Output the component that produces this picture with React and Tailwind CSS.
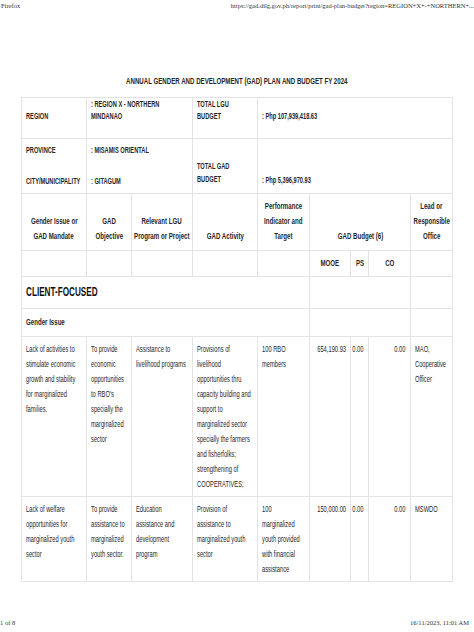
import React from "react";

const sans = "font-['Liberation_Sans',Arial,sans-serif]";

const Cell = ({ children, className = "", ...rest }) => (
  <td className={`border border-[#e3e3e3] px-[4px] ${className}`} {...rest}>
    {children}
  </td>
);

// the print is condensed, so every line of text is squeezed horizontally
const squeeze = {
  body: "scale-x-[0.64]",
  head: "scale-x-[0.68]",
  info: "scale-x-[0.63]",
};

const Line = ({ children, align = "left", kind = "body" }) => {
  const justify = align === "center" ? "justify-center" : align === "right" ? "justify-end" : "justify-start";
  const origin = align === "center" ? "origin-center" : align === "right" ? "origin-right" : "origin-left";
  return (
    <div className={`flex ${justify}`}>
      <span className={`whitespace-nowrap ${origin} ${squeeze[kind]}`}>{children}</span>
    </div>
  );
};

const Lines = ({ items, align, kind }) => (
  <>
    {items.map((t, i) => (
      <Line key={i} align={align} kind={kind}>{t}</Line>
    ))}
  </>
);

const rows = [
  {
    issue: ["Lack of activities to", "stimulate economic", "growth and stability", "for marginalized", "families."],
    objective: ["To provide", "economic", "opportunities", "to RBO's", "specially the", "marginalized", "sector"],
    program: ["Assistance to", "livelihood programs"],
    activity: [
      "Provisions of",
      "livelihood",
      "opportunities thru",
      "capacity building and",
      "support to",
      "marginalized sector",
      "specially the farmers",
      "and fisherfolks;",
      "strengthening of",
      "COOPERATIVES;",
    ],
    indicator: ["100 RBO", "members"],
    mooe: "654,190.93",
    ps: "0.00",
    co: "0.00",
    office: ["MAO,", "Cooperative", "Officer"],
  },
  {
    issue: ["Lack of welfare", "opportunities for", "marginalized youth", "sector"],
    objective: ["To provide", "assistance to", "marginalized", "youth sector."],
    program: ["Education", "assistance and", "development", "program"],
    activity: ["Provision of", "assistance to", "marginalized youth", "sector"],
    indicator: ["100", "marginalized", "youth provided", "with financial", "assistance"],
    mooe: "150,000.00",
    ps: "0.00",
    co: "0.00",
    office: ["MSWDO"],
  },
];

export default function App() {
  return (
    <div className="relative w-[474px] h-[632px] bg-white text-[#262626] overflow-hidden">
      {/* print header */}
      <div className="flex justify-between pl-[1px] pt-[1px] font-['Liberation_Serif',serif] text-[6.5px] leading-[9px] text-[#333]">
        <span>Firefox</span>
        <span className="whitespace-nowrap">https://gad.dilg.gov.ph/report/print/gad-plan-budget?region=REGION+X+-+NORTHERN+...</span>
      </div>

      <div className={`${sans} mt-[65px] text-[9px] font-bold leading-[12px]`}>
        <Line align="center" kind="head">ANNUAL GENDER AND DEVELOPMENT (GAD) PLAN AND BUDGET FY 2024</Line>
      </div>

      <table className={`${sans} mx-auto mt-[10px] w-[431px] table-fixed border-collapse text-[9px] leading-[15px]`}>
        <colgroup>
          <col className="w-[65px]" />
          <col className="w-[45px]" />
          <col className="w-[61px]" />
          <col className="w-[65px]" />
          <col className="w-[52px]" />
          <col className="w-[41px]" />
          <col className="w-[18px]" />
          <col className="w-[42px]" />
          <col className="w-[42px]" />
        </colgroup>
        <tbody>
          <tr className="h-[41px] align-bottom font-bold leading-[12px]">
            <Cell className="pb-[16px]"><Line kind="info">REGION</Line></Cell>
            <Cell colSpan={2} className="pb-[16px]">
              <Lines kind="info" items={[": REGION X - NORTHERN", "MINDANAO"]} />
            </Cell>
            <Cell className="pb-[16px]"><Lines kind="info" items={["TOTAL LGU", "BUDGET"]} /></Cell>
            <Cell colSpan={5} className="pb-[16px]"><Line kind="info">: Php 107,939,418.63</Line></Cell>
          </tr>
          <tr className="h-[55px] font-bold leading-[12px]">
            <Cell className="align-top pt-[5px]">
              <div className="flex h-[43px] flex-col justify-between">
                <Line kind="info">PROVINCE</Line>
                <Line kind="info">CITY/MUNICIPALITY</Line>
              </div>
            </Cell>
            <Cell colSpan={2} className="align-top pt-[5px]">
              <div className="flex h-[43px] flex-col justify-between">
                <Line kind="info">: MISAMIS ORIENTAL</Line>
                <Line kind="info">: GITAGUM</Line>
              </div>
            </Cell>
            <Cell className="align-bottom pb-[7px] leading-[13px]"><Lines kind="info" items={["TOTAL GAD", "BUDGET"]} /></Cell>
            <Cell colSpan={5} className="align-bottom pb-[7px]"><Line kind="info">: Php 5,396,970.93</Line></Cell>
          </tr>
          <tr className="h-[57px] align-bottom font-bold">
            <Cell className="pb-[6px]"><Lines align="center" kind="head" items={["Gender Issue or", "GAD Mandate"]} /></Cell>
            <Cell className="pb-[6px]"><Lines align="center" kind="head" items={["GAD", "Objective"]} /></Cell>
            <Cell className="pb-[6px]"><Lines align="center" kind="head" items={["Relevant LGU", "Program or Project"]} /></Cell>
            <Cell className="pb-[6px]"><Line align="center" kind="head">GAD Activity</Line></Cell>
            <Cell className="pb-[6px]"><Lines align="center" kind="head" items={["Performance", "Indicator and", "Target"]} /></Cell>
            <Cell colSpan={3} className="pb-[6px]"><Line align="center" kind="head">GAD Budget (6)</Line></Cell>
            <Cell className="pb-[6px]"><Lines align="center" kind="head" items={["Lead or", "Responsible", "Office"]} /></Cell>
          </tr>
          <tr className="h-[26px] font-bold">
            <Cell />
            <Cell />
            <Cell />
            <Cell />
            <Cell />
            <Cell><Line align="center" kind="head">MOOE</Line></Cell>
            <Cell><Line align="center" kind="head">PS</Line></Cell>
            <Cell><Line align="center" kind="head">CO</Line></Cell>
            <Cell />
          </tr>
          <tr className="h-[32px]">
            <Cell colSpan={5} className="text-[12px] font-bold text-[#111]">
              <Line kind="head">CLIENT-FOCUSED</Line>
            </Cell>
            <Cell colSpan={3} />
            <Cell />
          </tr>
          <tr className="h-[28px]">
            <Cell colSpan={5} className="font-bold"><Line kind="head">Gender Issue</Line></Cell>
            <Cell colSpan={3} />
            <Cell />
          </tr>
          {rows.map((r, i) => (
            <tr key={i} className="align-top">
              <Cell className="pt-[5px] pb-[4px]"><Lines items={r.issue} /></Cell>
              <Cell className="pt-[5px] pb-[4px]"><Lines items={r.objective} /></Cell>
              <Cell className="pt-[5px] pb-[4px]"><Lines items={r.program} /></Cell>
              <Cell className="pt-[5px] pb-[4px]"><Lines items={r.activity} /></Cell>
              <Cell className="pt-[5px] pb-[4px]"><Lines items={r.indicator} /></Cell>
              <Cell className="pt-[5px]"><Line align="right">{r.mooe}</Line></Cell>
              <Cell className="pt-[5px]"><Line align="right">{r.ps}</Line></Cell>
              <Cell className="pt-[5px]"><Line align="right">{r.co}</Line></Cell>
              <Cell className="pt-[5px]"><Lines items={r.office} /></Cell>
            </tr>
          ))}
        </tbody>
      </table>

      {/* print footer */}
      <div className="absolute bottom-[5px] left-0 right-0 flex justify-between pr-[5px] font-['Liberation_Serif',serif] text-[6.5px] leading-[9px] text-[#333]">
        <span>1 of 8</span>
        <span>16/11/2023, 11:01 AM</span>
      </div>
    </div>
  );
}
